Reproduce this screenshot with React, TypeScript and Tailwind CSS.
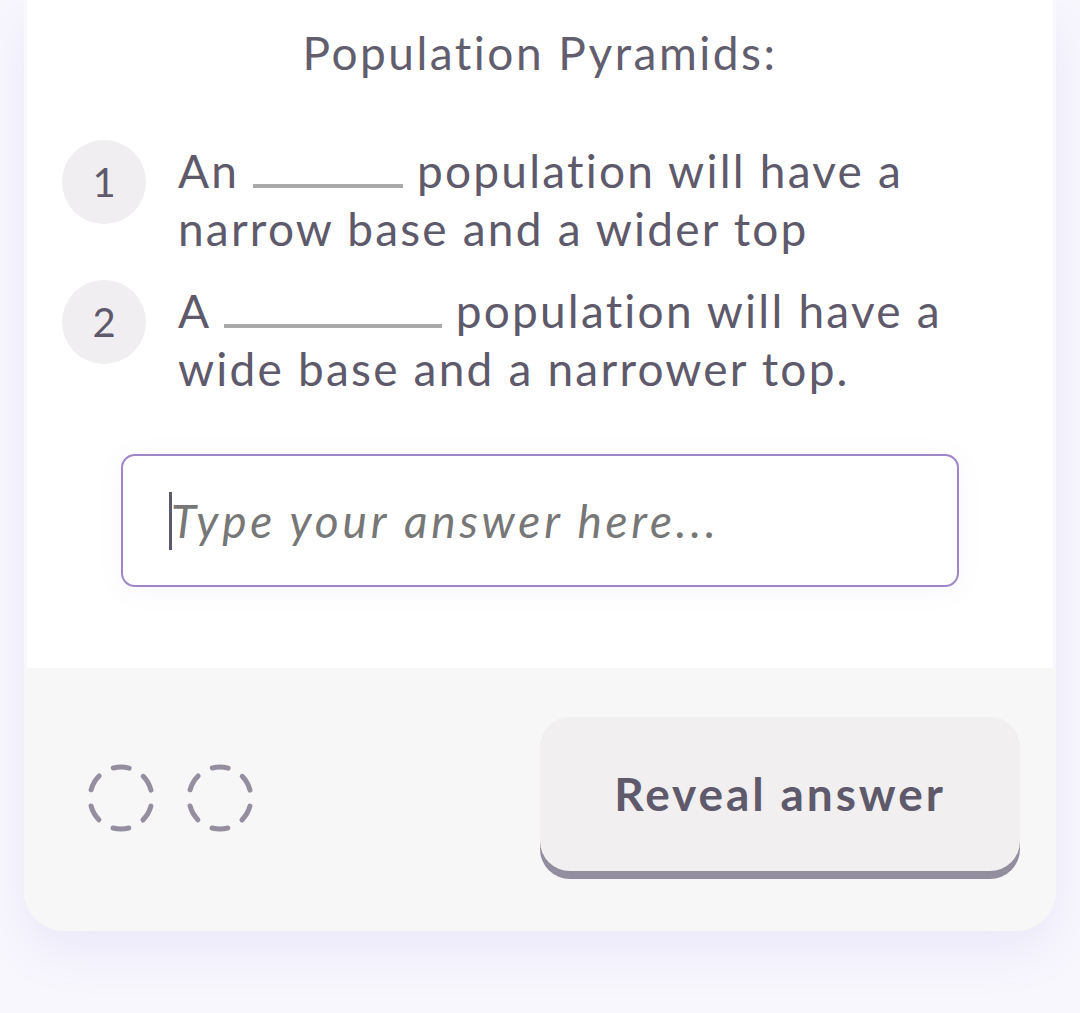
import React from "react";

const font = { fontFamily: '"Lato", "Noto Sans", sans-serif' };

function DashedCircle() {
  const r = 31;
  const c = 2 * Math.PI * r;
  const period = c / 6;
  const dash = 16;
  const gap = period - dash;
  return (
    <svg width="70" height="70" viewBox="0 0 70 70">
      <circle
        cx="35"
        cy="35"
        r={r}
        fill="none"
        stroke="#948ea0"
        strokeWidth="5"
        strokeLinecap="round"
        strokeDasharray={`${dash} ${gap}`}
        strokeDashoffset={dash + gap / 2}
      />
    </svg>
  );
}

function Blank({ w }: { w: string }) {
  return <span className={`inline-block h-[4px] bg-[#a9a9a9] align-baseline ${w}`} />;
}

export default function App() {
  return (
    <div className="w-[1080px] h-[1013px] overflow-hidden bg-[#f8f7fd]" style={font}>
      <div className="mx-[24px] rounded-b-[40px] shadow-[0_20px_50px_rgba(130,100,230,0.10)]">
        <div className="mx-[3px] bg-white pt-[26px] pb-[81px]">
          <h1 className="text-center text-[46px] font-normal tracking-[2.5px] leading-[54px] text-[#625e6e]">
            Population Pyramids:
          </h1>
          <div className="mt-[60px] pl-[35px] flex flex-col gap-[22px] text-[#5e5a6b]">
            <div className="flex items-start gap-[32px]">
              <div className="w-[84px] h-[84px] shrink-0 rounded-full bg-[#f0eef0] flex items-center justify-center text-[40px]">
                1
              </div>
              <p className="text-[46px] tracking-[2.2px] leading-[58px] pt-[2px] whitespace-nowrap">
                An <Blank w="w-[150px]" /> population will have a
                <br />
                narrow base and a wider top
              </p>
            </div>
            <div className="flex items-start gap-[32px]">
              <div className="w-[84px] h-[84px] shrink-0 rounded-full bg-[#f0eef0] flex items-center justify-center text-[40px]">
                2
              </div>
              <p className="text-[46px] tracking-[2.2px] leading-[58px] pt-[2px] whitespace-nowrap">
                A <Blank w="w-[218px]" /> population will have a
                <br />
                wide base and a narrower top.
              </p>
            </div>
          </div>
          <div className="mx-[94px] mt-[56px] h-[133px] rounded-[14px] border-2 border-[#9f86c8] bg-white shadow-[0_4px_24px_rgba(140,110,220,0.08)] flex items-center pl-[46px]">
            <span className="w-[3px] h-[58px] bg-[#5e5a6b] mr-[-1px]" />
            <span className="italic text-[46px] tracking-[3.8px] text-[#777777]">Type your answer here...</span>
          </div>
        </div>
        <div className="bg-[#f7f7f7] rounded-b-[40px] h-[263px] flex items-center justify-between pl-[62px] pr-[36px]">
          <div className="flex items-center gap-[29px] mt-[-4px]">
            <DashedCircle />
            <DashedCircle />
          </div>
          <button className="w-[480px] h-[154px] mt-[-12px] rounded-[30px] bg-[#f1eff0] shadow-[0_8px_0_#938da0] text-[46px] font-bold tracking-[2.9px] text-[#5e5a6b]">
            Reveal answer
          </button>
        </div>
      </div>
    </div>
  );
}
